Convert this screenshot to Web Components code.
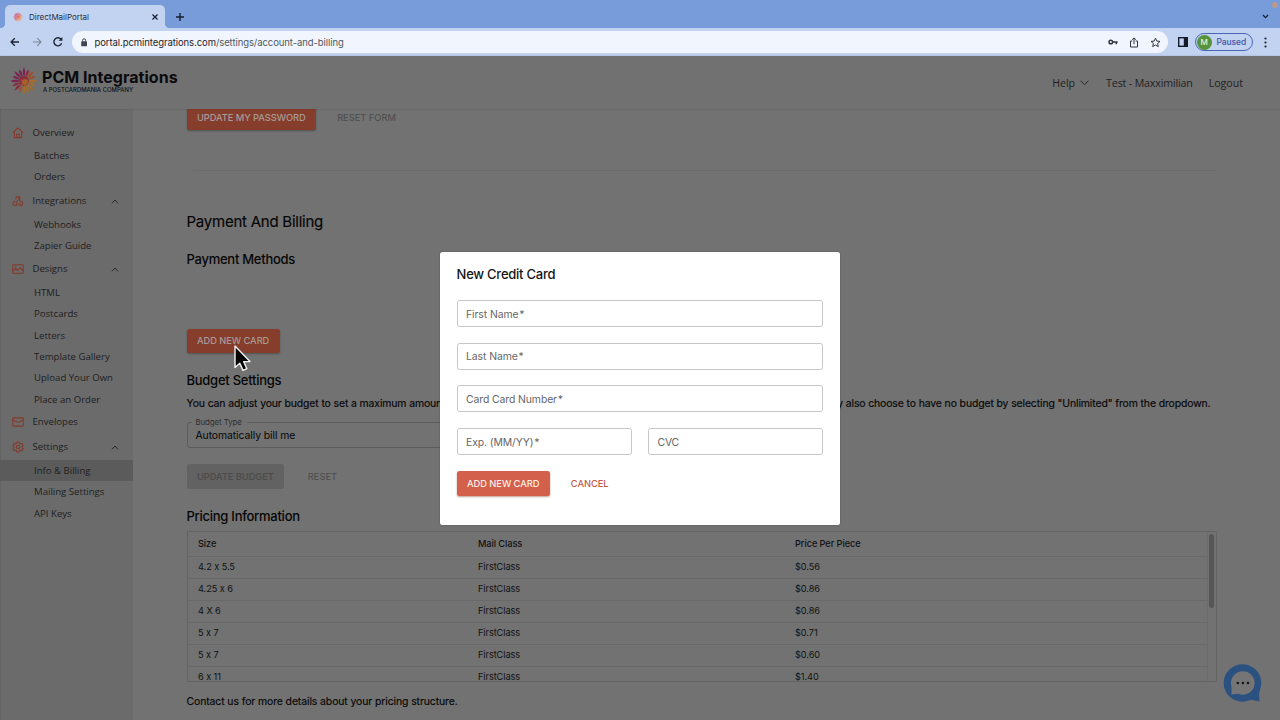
<!DOCTYPE html>
<html lang="en">
<head>
<meta charset="utf-8">
<title>DirectMailPortal</title>
<style>
html,body{margin:0;height:100%;overflow:hidden;background:#727272}
body{font-family:Inter,"Liberation Sans",sans-serif}
</style>
</head>
<body>
<portal-app></portal-app>
<script>
const define=(name,html)=>customElements.define(name,class extends HTMLElement{
  connectedCallback(){
    if(this.shadowRoot)return;
    const t=document.createElement('template');
    t.innerHTML=typeof html==='function'?html(this):html;
    this.attachShadow({mode:'open'}).append(t.content.cloneNode(true));
  }
});

/* Sunburst brand mark */
define('brand-mark',el=>{
  const bright=el.hasAttribute('bright');
  const c=bright?['#d9486a','#e0566a','#e8794f','#ee9a58']:['#7a2450','#8a2c3e','#a04e2c','#a66c2a'];
  let p='';
  for(let i=0;i<16;i++){
    const a=i*22.5, k=(1-Math.cos((a-315)*Math.PI/180))/2;
    const col=c[Math.min(3,Math.floor(k*4))];
    p+=`<path d="M16 11.5 C13.9 7.5 14.3 3.5 16 ${i%2?2:.4} C17.7 3.5 18.1 7.5 16 11.5Z" fill="${col}" transform="rotate(${a} 16 16)"/>`;
  }
  return `<style>:host{display:block;width:28px;height:28px}svg{display:block;width:100%;height:100%}</style>
  <svg viewBox="0 0 32 32">${p}<circle cx="16" cy="16" r="5.6" fill="${c[1]}"/><circle cx="17.6" cy="17.2" r="3.4" fill="${c[2]}"/><path d="M12 14l3 1 1-3 1.500 3 3-1-1 3 2 2-3 .5-1 3-2-2-3 1 1-3z" fill="${c[3]}" opacity=".6"/></svg>`;
});

define('browser-chrome',`<style>
:host{display:block;height:56px;flex:none;font-family:Inter,sans-serif}
svg{display:block;overflow:visible}
.strip{height:28px;background:#789bd9;display:flex;align-items:flex-end;padding-left:5px;position:relative;box-sizing:border-box}
.tab{width:160px;height:23px;background:#c2d2f1;border-radius:5px 5px 0 0;display:flex;align-items:center;padding:0 7.500px 0 8px;box-sizing:border-box;font-size:8px;letter-spacing:-.01px;color:#27303f;position:relative}
.tab:before,.tab:after{content:"";position:absolute;bottom:0;width:5px;height:5px}
.tab:before{left:-5px;background:radial-gradient(circle at 0 0,transparent 5px,#c2d2f1 5.4px)}
.tab:after{right:-5px;background:radial-gradient(circle at 100% 0,transparent 5px,#c2d2f1 5.4px)}
brand-mark{width:10px;height:10px;margin-right:6px}
.tab svg{margin-left:auto}
.plus{margin:0 0 7.500px 11px}
.chev{margin:0 11px 7px auto;height:9px}
.dot{position:absolute;right:2px;top:2px;width:6px;height:6px;border-radius:50%;background:#b99a8c}
.bar{height:28px;background:#c2d2f1;display:flex;align-items:center;padding:0 11px 0 9px;box-sizing:border-box}
.nav{display:flex;gap:9.500px;width:63px}
.omni{width:1096px;height:22px;border-radius:11px;background:#f1f6fe;display:flex;align-items:center;box-sizing:border-box;padding:0 7px 0 8px;font-size:9.5px;letter-spacing:-.08px;color:#1d232c;white-space:nowrap}
.omni span{color:#4e5661}
.omni .lock{margin-right:6.500px}
.acts{margin-left:auto;display:flex;gap:11px;align-items:center}
.panel{margin-left:9.500px}
.pill{margin-left:7px;width:58px;height:18px;border:1px solid #4a66b4;border-radius:10px;display:flex;align-items:center;box-sizing:border-box;padding-left:1px;font-size:8.500px;font-weight:500;color:#3c55a5;letter-spacing:-.08px}
.av{width:15px;height:15px;border-radius:50%;background:#55943a;color:#e8f3e0;display:flex;align-items:center;justify-content:center;font-size:8px;margin-right:5px}
.more{margin-left:auto;margin-right:2.500px}
</style>
<div class="strip">
 <div class="tab"><brand-mark bright></brand-mark>DirectMailPortal<svg width="6" height="6" viewBox="0 0 6 6" stroke="#1a2230" stroke-width="1.300"><path d="M.5.5l5 5M5.500.5l-5 5"/></svg></div>
 <svg class="plus" width="8" height="8" viewBox="0 0 8 8" stroke="#16202f" stroke-width="1.400"><path d="M4 0v8M0 4h8"/></svg>
 <svg class="chev" width="7" height="9" viewBox="0 0 7 9" fill="none" stroke="#16202f" stroke-width="1.300"><path d="M1 3l2.500 2.600L6 3"/></svg>
 <i class="dot"></i>
</div>
<div class="bar">
 <div class="nav">
  <svg width="12" height="12" viewBox="0 0 12 12" fill="none" stroke="#1c2430" stroke-width="1.300"><path d="M10 6H2M5.800 2.200L2 6l3.800 3.800"/></svg>
  <svg width="12" height="12" viewBox="0 0 12 12" fill="none" stroke="#7d8799" stroke-width="1.100"><path d="M2 6h8M6.200 2.200L10 6 6.200 9.800"/></svg>
  <svg width="12" height="12" viewBox="0 0 12 12" fill="none" stroke="#1c2430" stroke-width="1.400"><path d="M9.600 7.300A4 4 0 1 1 9 3.300"/><path d="M10.400 1v3.800H6.600z" fill="#1c2430" stroke="none"/></svg>
 </div>
 <div class="omni"><svg class="lock" width="8" height="9" viewBox="0 0 8 9"><rect x="1.200" y="3.300" width="5.800" height="5" rx=".6" fill="#3f4650"/><path d="M2.600 3.500V2.300a1.500 1.500 0 0 1 3 0v1.200" fill="none" stroke="#3f4650"/></svg>portal.pcmintegrations.com<span>/settings/account-and-billing</span>
  <div class="acts">
   <svg width="10" height="8" viewBox="0 0 10 8" fill="none" stroke="#30363f" stroke-width="1.500"><circle cx="2.800" cy="4" r="1.800"/><path d="M4.600 4H9.700M8.300 4v2.300"/></svg>
   <svg width="10" height="11" viewBox="0 0 10 11" fill="none" stroke="#30363f"><path d="M3.300 4H1.500v6h7V4H6.700M5 7.200V1M3.100 2.700L5 .9l1.900 1.800"/></svg>
   <svg width="11" height="11" viewBox="0 0 11 11" fill="none" stroke="#30363f"><path d="M5.500 1.200l1.300 2.900 3.200.3-2.400 2.100.7 3.100-2.800-1.600-2.800 1.600.7-3.100L1 4.400l3.200-.3z"/></svg>
  </div>
 </div>
 <svg class="panel" width="10" height="10" viewBox="0 0 10 10"><rect x=".7" y=".7" width="8.600" height="8.600" fill="none" stroke="#141b26" stroke-width="1.400"/><path d="M5.800 0H10v10H5.800z" fill="#141b26"/></svg>
 <div class="pill"><span class="av">M</span>Paused</div>
 <svg class="more" width="3" height="11" viewBox="0 0 3 11" fill="#1c2430"><circle cx="1.500" cy="1.500" r="1.100"/><circle cx="1.500" cy="5.500" r="1.100"/><circle cx="1.500" cy="9.500" r="1.100"/></svg>
</div>`);

define('portal-header',`<style>
:host{display:flex;height:52.500px;flex:none;align-items:center;background:#717171;box-shadow:0 0 2px rgba(0,0,0,.18);box-sizing:border-box;padding:0 37px 0 10px;position:relative;z-index:1}
.logo{display:flex;margin-top:-2px;gap:4px;align-items:center}
.name{font:650 16px/17px Inter,sans-serif;letter-spacing:.03px;color:#0b0b0d;white-space:nowrap}
.tag{font:500 5.900px/7px Inter,sans-serif;color:#111;white-space:nowrap;margin-left:1px;letter-spacing:.02px}
nav{margin-left:auto;display:flex;align-items:center;font:400 10.600px/16px "Open Sans",sans-serif;color:#1f1f1f;white-space:nowrap;padding-top:1px}
nav svg{margin:0 17px 0 5px}
nav b{font-weight:400;margin-right:16px;letter-spacing:-.13px}
</style>
<div class="logo"><brand-mark></brand-mark><div><div class="name">PCM Integrations</div><div class="tag">A POSTCARDMANIA COMPANY</div></div></div>
<nav>Help<svg width="9" height="6" viewBox="0 0 9 6" fill="none" stroke="#262626"><path d="M.5.7l4 4 4-4"/></svg><b>Test - Maxximilian</b>Logout</nav>`);

const icons={
home:'<path d="M1.200 6L6.500 1l5.300 5M2.500 5v6.500h8V5M5 11.500V7.800h3v3.700"/>',
hook:'<path d="M6.200 5.800L4 9.400M4.400 4.600a2.200 2.200 0 1 1 4 .1M8.600 4.700L6.500 3l2.300 4.100"/><path d="M8.800 7a2.300 2.300 0 1 1-.8 4M3.800 7a2.300 2.300 0 1 0 1.700 2.800h4.600"/>',
image:'<rect x=".8" y="1.800" width="11.400" height="9.400" rx=".8"/><path d="M1 9l3-3.200 2.400 2.400 2.300-3L12 8.400"/><circle cx="4" cy="4" r=".3"/>',
mail:'<rect x=".8" y="2" width="11.400" height="9" rx="1"/><path d="M1.200 4.300C4 7.500 9 7.500 11.800 4.300"/>',
gear:'<path d="M5.300 1h2.400l.4 1.600 1.100.6 1.600-.5L12 4.800l-1.100 1.100v1.200L12 8.200l-1.200 2.100-1.600-.5-1.100.6L7.700 12H5.300l-.4-1.600-1.100-.6-1.600.5L1 8.200l1.100-1.100V5.900L1 4.800l1.200-2.100 1.600.5 1.100-.6z"/><circle cx="6.500" cy="6.500" r="1.900"/>'};

define('nav-item',el=>{
  const ic=el.getAttribute('icon'),sub=!ic;
  return `<style>
  :host{display:flex;align-items:center;box-sizing:border-box;height:${el.getAttribute('h')}px;padding:0 14px 0 ${sub?34:12}px;font:400 9.600px/14px "Open Sans",sans-serif;color:#1e1e1e;white-space:nowrap}
  :host([active]){background:#5b5b5b}
  .i{margin-right:8.500px;stroke:#85392a;stroke-width:1.150;fill:none}
  .c{margin-left:auto;fill:none;stroke:#2a2a2a}</style>
  ${ic?`<svg class="i" width="12" height="12" viewBox="0 0 13 13">${icons[ic]}</svg>`:''}<slot></slot>
  ${el.hasAttribute('open')?'<svg class="c" width="8" height="5" viewBox="0 0 8 5"><path d="M1 4.300l3-3.300 3 3.300"/></svg>':''}`;
});

define('side-nav',`<style>:host{display:block;width:133px;flex:none;background:#6b6b6b;padding-top:12.700px;box-sizing:border-box;border-left:1px solid #626463;box-shadow:1px 0 2px rgba(0,0,0,.06)}
nav-item{margin-left:-1px}</style>
<nav-item icon="home" h="24">Overview</nav-item><nav-item h="21">Batches</nav-item><nav-item h="22.500">Orders</nav-item>
<nav-item icon="hook" h="25" open>Integrations</nav-item><nav-item h="22">Webhooks</nav-item><nav-item h="21">Zapier Guide</nav-item>
<nav-item icon="image" h="25" open>Designs</nav-item><nav-item h="22">HTML</nav-item><nav-item h="21">Postcards</nav-item><nav-item h="22">Letters</nav-item><nav-item h="21">Template Gallery</nav-item><nav-item h="21.500">Upload Your Own</nav-item><nav-item h="21.500">Place an Order</nav-item>
<nav-item icon="mail" h="23.500">Envelopes</nav-item>
<nav-item icon="gear" h="26" open>Settings</nav-item><nav-item h="21" active>Info &amp; Billing</nav-item><nav-item h="22.500">Mailing Settings</nav-item><nav-item h="21">API Keys</nav-item>`);

define('ui-button',`<style>
:host{display:inline-flex;align-items:center;justify-content:center;box-sizing:border-box;height:24.500px;padding:1px 10.500px 0;border-radius:2.500px;font:500 9.300px/12px Inter,sans-serif;letter-spacing:-.05px;white-space:nowrap}
:host([kind=dim]){background:#873d2c;color:#a59b98;box-shadow:0 1px 2px rgba(0,0,0,.3)}
:host([kind=off]){background:#626262;color:#4a4a4a}
:host([kind=ghost]){color:#4b4b4b;font-weight:400;letter-spacing:0}
:host([kind=main]){background:#d2604b;color:#fdeee9;box-shadow:0 1px 2px rgba(120,40,20,.45)}
:host([kind=text]){color:#c65a48}
</style><slot></slot>`);

define('price-table',()=>{
  const rows=[['4.2 x 5.5','$0.56'],['4.25 x 6','$0.86'],['4 X 6','$0.86'],['5 x 7','$0.71'],['5 x 7','$0.60'],['6 x 11','$1.40']];
  return `<style>
  :host{display:flex;box-sizing:border-box;width:1030px;height:151.500px;overflow:hidden;border:1px solid #636363;border-radius:1px;font:400 9.200px/12px Inter,sans-serif;letter-spacing:-.07px;color:#111}
  .rows{flex:1}
  .r{display:grid;grid-template-columns:280px 317px 1fr;align-items:center;height:22px;padding-left:10.500px;border-bottom:1px solid #696969;box-sizing:border-box}
  .h{height:25px;font-weight:500;padding-top:1px}
  .track{width:9px;border-left:1px solid #6c6c6c;box-sizing:border-box}
  .thumb{margin:2px 0 0 1.500px;width:5px;height:74px;border-radius:3px;background:#565656}
  </style><div class="rows"><div class="r h"><span>Size</span><span>Mail Class</span><span>Price Per Piece</span></div>
  ${rows.map(([a,b])=>`<div class="r"><span>${a}</span><span>FirstClass</span><span>${b}</span></div>`).join('')}</div>
  <div class="track"><div class="thumb"></div></div>`;
});

define('billing-page',`<style>
:host{display:block;flex:1;min-width:0;background:#727272;padding-left:53.500px;overflow:hidden;color:#060606}
.row{display:flex;align-items:flex-start}
ui-button+ui-button{margin-left:10.500px}
h1{font:400 15px/20px Inter,sans-serif;letter-spacing:-.24px;margin:0;-webkit-text-stroke:.15px}
h2{font:500 13px/18px Inter,sans-serif;letter-spacing:-.26px;margin:0}
p{font:400 10.400px/14px Inter,sans-serif;letter-spacing:-.1px;margin:0;white-space:nowrap;-webkit-text-stroke:.15px}
.pw{margin-top:-3px}
hr{border:0;border-top:1px solid #6b6b6b;margin:39.500px 0 0 6px;width:1024px}
.copy{display:flex;justify-content:space-between;width:1024px}
fieldset{margin:6px 0 0;width:560px;height:31px;box-sizing:border-box;border:1px solid #5c5c5c;border-radius:3px;padding:2px 8px 0;font:400 10.400px/14px Inter,sans-serif;letter-spacing:-.08px}
legend{font-size:7.800px;line-height:10px;padding:0 5px 0 4px;margin-left:-4px;color:#2e2e2e;letter-spacing:-.05px}
</style>
<div class="row pw"><ui-button kind="dim">UPDATE MY PASSWORD</ui-button><ui-button kind="ghost">RESET FORM</ui-button></div>
<hr>
<h1 style="margin-top:41px">Payment And Billing</h1>
<h2 style="margin-top:18px">Payment Methods</h2>
<div class="row" style="margin-top:61px"><ui-button kind="dim">ADD NEW CARD</ui-button></div>
<h2 style="margin-top:17.500px">Budget Settings</h2>
<p class="copy" style="margin-top:8.500px"><span>You can adjust your budget to set a maximum amount.</span><span>You may also choose to have no budget by selecting "Unlimited" from the dropdown.</span></p>
<fieldset><legend>Budget Type</legend>Automatically bill me</fieldset>
<div class="row" style="margin-top:16px"><ui-button kind="off">UPDATE BUDGET</ui-button><ui-button kind="ghost" style="margin-left:13px">RESET</ui-button></div>
<h2 style="margin:18px 0 6px">Pricing Information</h2>
<price-table></price-table>
<p style="margin-top:13px;letter-spacing:-.08px">Contact us for more details about your pricing structure.</p>`);

define('text-field',`<style>
:host{display:flex;align-items:center;box-sizing:border-box;height:27px;border:1px solid #c6c6c6;border-radius:2.500px;padding:2px 0 0 8.500px;font:400 10.400px/14px Inter,sans-serif;letter-spacing:-.09px;color:#666}
</style><slot></slot>`);

define('card-dialog',`<style>
:host{display:flex;flex-direction:column;box-sizing:border-box;width:399.500px;height:273px;background:#fff;border-radius:2.500px;padding:12.500px 16.500px 0 16.400px;box-shadow:0 0 2px rgba(0,0,0,.25);color:#151515}
h2{font:500 13px/18px Inter,sans-serif;letter-spacing:-.25px;margin:0 0 17.500px}
.f{display:grid;grid-template-columns:1fr 1fr;gap:15.700px 16px}
.w{grid-column:1/3}
.b{display:flex;gap:10.500px;margin-top:16px}
</style>
<h2>New Credit Card</h2>
<div class="f"><text-field class="w">First Name&#8202;*</text-field><text-field class="w">Last Name&#8202;*</text-field><text-field class="w">Card Card Number&#8202;*</text-field><text-field>Exp. (MM/YY)&#8202;*</text-field><text-field>CVC</text-field></div>
<div class="b"><ui-button kind="main">ADD NEW CARD</ui-button><ui-button kind="text">CANCEL</ui-button></div>`);

define('chat-bubble',`<style>:host{display:block;width:40px;height:42px}svg{display:block}</style>
<svg width="40" height="42" viewBox="0 0 40 42"><circle cx="19.500" cy="20" r="18.800" fill="#2b5180"/><path d="M37 25l-1 6 .5 7.500-9-2z" fill="#2b5180"/><circle cx="19.800" cy="20" r="11.800" fill="#757575"/><path d="M8.500 23l0 8.500 8-1z" fill="#757575"/><g fill="#151515"><circle cx="14.800" cy="20" r="1.300"/><circle cx="19.900" cy="20" r="1.300"/><circle cx="25" cy="20" r="1.300"/></g></svg>`);

define('mouse-pointer',`<style>:host{display:block}svg{display:block;overflow:visible}</style>
<svg width="17" height="27" viewBox="0 0 17 27"><path d="M1 1v21.500l4.800-4.300 3.200 7.200 3.900-1.700-3.200-7.100h6.300z" fill="#050505" stroke="#f2f2f2" stroke-width="1.400" stroke-linejoin="round"/></svg>`);

define('portal-app',`<style>
:host{display:flex;flex-direction:column;width:1280px;height:720px;overflow:hidden;position:relative}
.body{display:flex;flex:1;min-height:0}
card-dialog{position:absolute;left:440.200px;top:252px}
chat-bubble{position:absolute;left:1223px;top:663px}
mouse-pointer{position:absolute;left:233.500px;top:345px}
</style>
<browser-chrome></browser-chrome><portal-header></portal-header>
<div class="body"><side-nav></side-nav><billing-page></billing-page></div>
<card-dialog></card-dialog><chat-bubble></chat-bubble><mouse-pointer></mouse-pointer>`);
</script>
</body>
</html>
